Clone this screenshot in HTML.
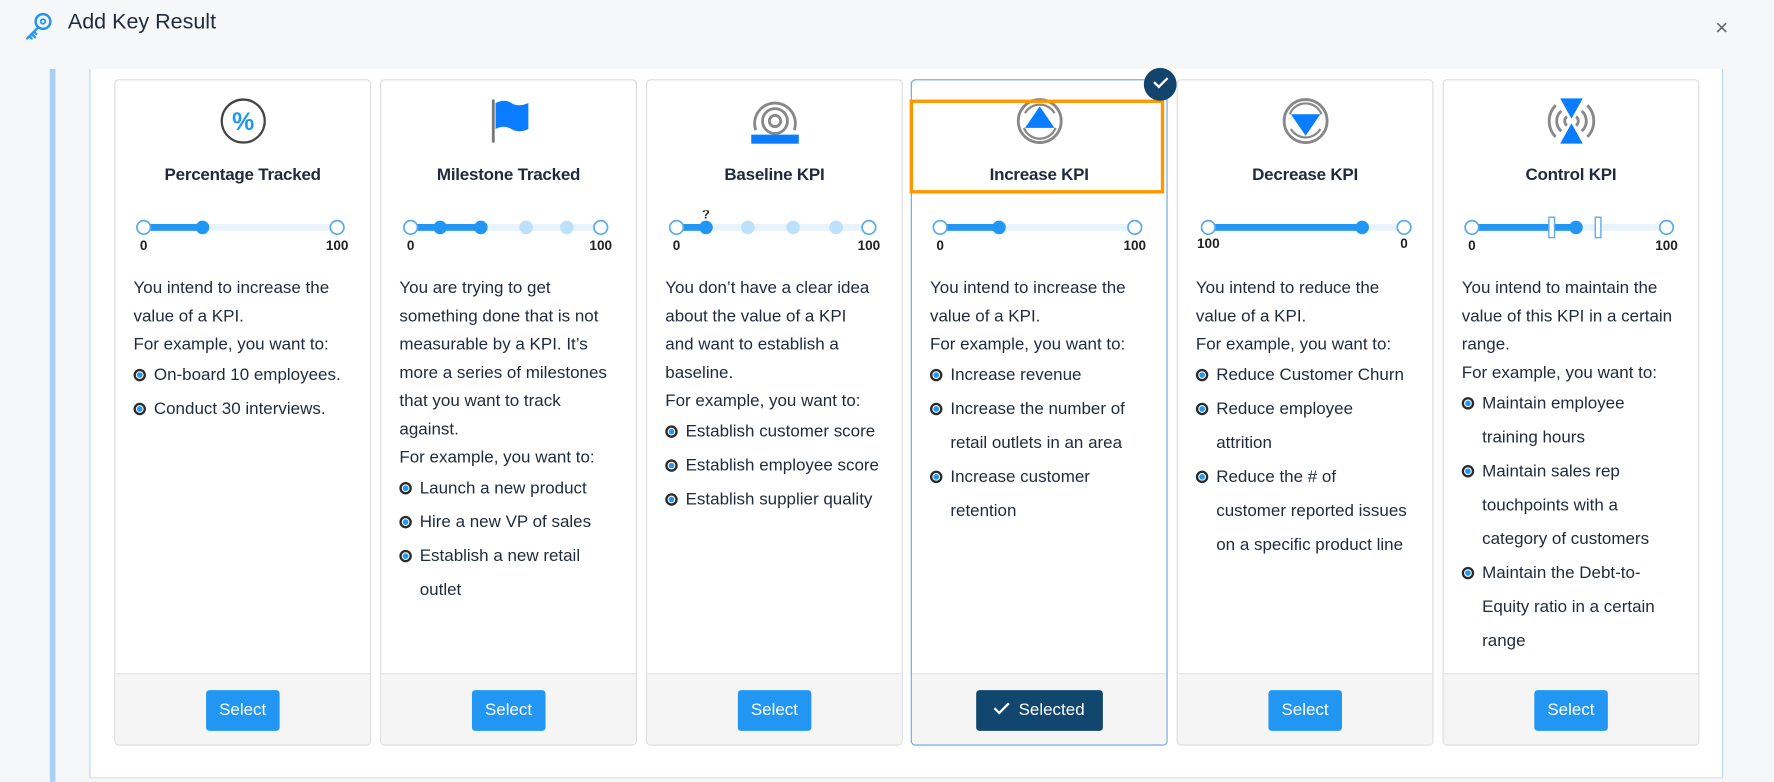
<!DOCTYPE html>
<html><head><meta charset="utf-8"><style>
html,body{margin:0;padding:0;}
body{width:1774px;height:782px;overflow:hidden;background:#f6f7f9;font-family:"Liberation Sans",sans-serif;}
#s{position:absolute;left:0;top:0;width:1568px;height:691px;transform:scale(1.13138);transform-origin:0 0;background:#f6f7f9;}
.abs{position:absolute;}
.card{position:absolute;top:70px;width:227px;height:589px;border:1px solid #dcdcdc;border-radius:4px;background:#fff;box-sizing:border-box;overflow:visible;}
.card.sel{border-color:#6aa3d8;}
.foot{position:absolute;left:0;right:0;bottom:0;height:62px;background:#f5f5f5;border-top:1px solid #dcdcdc;border-radius:0 0 4px 4px;}
.btn{position:absolute;top:14px;left:50%;transform:translateX(-50%);height:36px;line-height:36px;padding:0 12px;background:#2196f3;color:#fff;border-radius:3px;font-size:15px;white-space:nowrap;}
.title{position:absolute;top:75px;left:0;right:0;text-align:center;font-size:15px;color:#1f2a3c;font-weight:bold;letter-spacing:-0.2px;}
.icon{position:absolute;top:14px;left:50%;margin-left:-22px;width:44px;height:44px;}
.sl{position:absolute;top:115px;left:0;}
.txt{position:absolute;top:171px;left:16px;right:4px;font-size:15px;color:#1f2a3c;line-height:25px;white-space:nowrap;}
.li{position:relative;padding-left:18px;line-height:30px;}
.li:before{content:"";position:absolute;left:0;top:9px;width:7px;height:7px;border:2.5px solid #2a2a2a;border-radius:50%;background:#2196f3;box-shadow:inset 0 0 0 1px #fff;}
</style></head><body><div id="s">
<svg class="abs" style="left:20px;top:9px" width="30" height="28" viewBox="0 0 30 28"><circle cx="18" cy="10" r="6.5" fill="none" stroke="#2196f3" stroke-width="2.2"/><circle cx="18" cy="10" r="2" fill="none" stroke="#2196f3" stroke-width="1.6"/><path d="M14 15 L4 25 M8 21 L11 24 M6 23 L8 25 M10 19 L12 21" stroke="#2196f3" stroke-width="2" fill="none" stroke-linecap="round"/></svg>
<div class="abs" style="left:60px;top:9px;font-size:19px;color:#1f2a3c;">Add Key Result</div>
<div class="abs" style="left:1516px;top:14px;font-size:20px;color:#666;">×</div>
<div class="abs" style="left:44px;top:61px;width:5px;height:630px;background:#a9cff3;"></div>
<div class="abs" style="left:79px;top:61px;width:1444px;height:627px;background:#fff;border-left:1px solid #b9d8f5;border-right:1px solid #b9d8f5;box-sizing:border-box;"></div>
<div class="abs" style="left:79px;top:687px;width:1444px;height:1px;background:#ddd;"></div>

<div class="card" style="left:101px">
<svg class="icon" viewBox="0 0 44 44"><circle cx="22" cy="22" r="19" fill="none" stroke="#444" stroke-width="2"/><text x="22" y="30" text-anchor="middle" font-family="Liberation Sans" font-weight="bold" font-size="22" fill="#2196f3">%</text></svg>
<div class="title">Percentage Tracked</div>
<svg class="sl" width="227" height="45"><rect x="25" y="12" width="172" height="6" fill="#e8f3fc"/><rect x="25" y="12" width="52" height="6" fill="#2196f3"/><circle cx="25" cy="15" r="6" fill="#fff" stroke="#5aa9f0" stroke-width="1.5"/><circle cx="77" cy="15" r="6" fill="#2196f3"/><circle cx="196" cy="15" r="6" fill="#fff" stroke="#5aa9f0" stroke-width="1.5"/><text x="25" y="35" text-anchor="middle" font-size="12" font-weight="bold" fill="#222">0</text><text x="196" y="35" text-anchor="middle" font-size="12" font-weight="bold" fill="#222">100</text></svg>
<div class="txt">You intend to increase the<br>value of a KPI.<br>For example, you want to:<div class="li">On-board 10 employees.</div><div class="li">Conduct 30 interviews.</div></div>
<div class="foot"><div class="btn">Select</div></div></div>

<div class="card" style="left:336px">
<svg class="icon" viewBox="0 0 44 44"><line x1="8" y1="4" x2="8" y2="40" stroke="#777" stroke-width="2.5" stroke-linecap="round"/><path d="M10 6 Q18 2 24 6 T39 6 L39 29 Q31 33 24 29 T10 29 Z" fill="#0a7cff"/></svg>
<div class="title">Milestone Tracked</div>
<svg class="sl" width="227" height="45"><rect x="26" y="12" width="168" height="6" fill="#e8f3fc"/><rect x="26" y="12" width="62" height="6" fill="#2196f3"/><circle cx="26" cy="15" r="6" fill="#fff" stroke="#5aa9f0" stroke-width="1.5"/><circle cx="52" cy="15" r="6" fill="#2196f3"/><circle cx="88" cy="15" r="6" fill="#2196f3"/><circle cx="128" cy="15" r="6" fill="#bde0fb"/><circle cx="164" cy="15" r="6" fill="#bde0fb"/><circle cx="194" cy="15" r="6" fill="#fff" stroke="#5aa9f0" stroke-width="1.5"/><text x="26" y="35" text-anchor="middle" font-size="12" font-weight="bold" fill="#222">0</text><text x="194" y="35" text-anchor="middle" font-size="12" font-weight="bold" fill="#222">100</text></svg>
<div class="txt">You are trying to get<br>something done that is not<br>measurable by a KPI. It’s<br>more a series of milestones<br>that you want to track<br>against.<br>For example, you want to:<div class="li">Launch a new product</div><div class="li">Hire a new VP of sales</div><div class="li">Establish a new retail<br>outlet</div></div>
<div class="foot"><div class="btn">Select</div></div></div>

<div class="card" style="left:571px">
<svg class="icon" viewBox="0 0 44 44"><path d="M5 30 A18 18 0 1 1 39 30" fill="none" stroke="#888" stroke-width="2.5"/><circle cx="22" cy="22" r="11" fill="none" stroke="#888" stroke-width="2.5"/><circle cx="22" cy="22" r="5" fill="none" stroke="#888" stroke-width="2.5"/><rect x="1" y="34" width="42" height="8" fill="#0a7cff"/></svg>
<div class="title">Baseline KPI</div>
<svg class="sl" width="227" height="45"><rect x="26" y="12" width="170" height="6" fill="#e8f3fc"/><rect x="26" y="12" width="26" height="6" fill="#2196f3"/><circle cx="26" cy="15" r="6" fill="#fff" stroke="#5aa9f0" stroke-width="1.5"/><circle cx="52" cy="15" r="6" fill="#2196f3"/><circle cx="89" cy="15" r="6" fill="#bde0fb"/><circle cx="129" cy="15" r="6" fill="#bde0fb"/><circle cx="167" cy="15" r="6" fill="#bde0fb"/><circle cx="196" cy="15" r="6" fill="#fff" stroke="#5aa9f0" stroke-width="1.5"/><text x="52" y="7" text-anchor="middle" font-size="11" font-weight="bold" fill="#222">?</text><text x="26" y="35" text-anchor="middle" font-size="12" font-weight="bold" fill="#222">0</text><text x="196" y="35" text-anchor="middle" font-size="12" font-weight="bold" fill="#222">100</text></svg>
<div class="txt">You don’t have a clear idea<br>about the value of a KPI<br>and want to establish a<br>baseline.<br>For example, you want to:<div class="li">Establish customer score</div><div class="li">Establish employee score</div><div class="li">Establish supplier quality</div></div>
<div class="foot"><div class="btn">Select</div></div></div>

<div class="card sel" style="left:805px">
<svg class="icon" viewBox="0 0 44 44"><circle cx="22" cy="22" r="19" fill="none" stroke="#888" stroke-width="2.5"/><path d="M8 28 A15 15 0 0 0 36 28" fill="none" stroke="#888" stroke-width="2"/><path d="M9 15 A15 15 0 0 1 35 15" fill="none" stroke="#888" stroke-width="2"/><path d="M22 9 L35 28 L9 28 Z" fill="#0a7cff"/></svg>
<div class="title">Increase KPI</div>
<svg class="sl" width="227" height="45"><rect x="25" y="12" width="172" height="6" fill="#e8f3fc"/><rect x="25" y="12" width="52" height="6" fill="#2196f3"/><circle cx="25" cy="15" r="6" fill="#fff" stroke="#5aa9f0" stroke-width="1.5"/><circle cx="77" cy="15" r="6" fill="#2196f3"/><circle cx="197" cy="15" r="6" fill="#fff" stroke="#5aa9f0" stroke-width="1.5"/><text x="25" y="35" text-anchor="middle" font-size="12" font-weight="bold" fill="#222">0</text><text x="197" y="35" text-anchor="middle" font-size="12" font-weight="bold" fill="#222">100</text></svg>
<div class="txt">You intend to increase the<br>value of a KPI.<br>For example, you want to:<div class="li">Increase revenue</div><div class="li">Increase the number of<br>retail outlets in an area</div><div class="li">Increase customer<br>retention</div></div>
<div class="foot"><div class="btn" style="background:#11466f;padding:0 16px;"><span style="display:inline-block;width:11px;height:5px;border-left:2px solid #fff;border-bottom:2px solid #fff;transform:rotate(-45deg);margin:0 9px 4px 0;"></span>Selected</div></div>
<div class="abs" style="left:-2px;top:17px;width:225px;height:83px;border:3px solid #ff9800;box-sizing:border-box;"></div>
<div class="abs" style="left:205px;top:-11px;width:29px;height:29px;border-radius:50%;background:#12446c;"><span style="position:absolute;left:9px;top:8px;width:10px;height:5px;border-left:2px solid #fff;border-bottom:2px solid #fff;transform:rotate(-45deg);"></span></div>
</div>

<div class="card" style="left:1040px">
<svg class="icon" viewBox="0 0 44 44"><circle cx="22" cy="22" r="19" fill="none" stroke="#888" stroke-width="2.5"/><path d="M8 16 A15 15 0 0 1 36 16" fill="none" stroke="#888" stroke-width="2"/><path d="M9 29 A15 15 0 0 0 35 29" fill="none" stroke="#888" stroke-width="2"/><path d="M9 16 L35 16 L22 35 Z" fill="#0a7cff"/></svg>
<div class="title">Decrease KPI</div>
<svg class="sl" width="227" height="45"><rect x="27" y="12" width="173" height="6" fill="#e8f3fc"/><rect x="27" y="12" width="136" height="6" fill="#2196f3"/><circle cx="27" cy="15" r="6" fill="#fff" stroke="#5aa9f0" stroke-width="1.5"/><circle cx="163" cy="15" r="6" fill="#2196f3"/><circle cx="200" cy="15" r="6" fill="#fff" stroke="#5aa9f0" stroke-width="1.5"/><text x="27" y="33" text-anchor="middle" font-size="12" font-weight="bold" fill="#222">100</text><text x="200" y="33" text-anchor="middle" font-size="12" font-weight="bold" fill="#222">0</text></svg>
<div class="txt">You intend to reduce the<br>value of a KPI.<br>For example, you want to:<div class="li">Reduce Customer Churn</div><div class="li">Reduce employee<br>attrition</div><div class="li">Reduce the # of<br>customer reported issues<br>on a specific product line</div></div>
<div class="foot"><div class="btn">Select</div></div></div>

<div class="card" style="left:1275px">
<svg class="icon" viewBox="0 0 44 44"><path d="M8 8 A20 20 0 0 0 8 36 M36 8 A20 20 0 0 1 36 36 M13 13 A12 12 0 0 0 13 31 M31 13 A12 12 0 0 1 31 31 M18 18 A5 5 0 0 0 18 26 M26 18 A5 5 0 0 1 26 26" fill="none" stroke="#888" stroke-width="2.5"/><path d="M12 2 L32 2 L22 20 Z M12 42 L32 42 L22 24 Z" fill="#0a7cff"/></svg>
<div class="title">Control KPI</div>
<svg class="sl" width="227" height="45"><rect x="25" y="12" width="172" height="6" fill="#e8f3fc"/><rect x="25" y="12" width="92" height="6" fill="#2196f3"/><circle cx="25" cy="15" r="6" fill="#fff" stroke="#5aa9f0" stroke-width="1.5"/><rect x="93" y="6" width="5" height="18" fill="#fff" stroke="#5aa9f0" stroke-width="1.2"/><circle cx="117" cy="15" r="6" fill="#2196f3"/><rect x="134" y="6" width="5" height="18" fill="#fff" stroke="#5aa9f0" stroke-width="1.2"/><circle cx="197" cy="15" r="6" fill="#fff" stroke="#5aa9f0" stroke-width="1.5"/><text x="25" y="35" text-anchor="middle" font-size="12" font-weight="bold" fill="#222">0</text><text x="197" y="35" text-anchor="middle" font-size="12" font-weight="bold" fill="#222">100</text></svg>
<div class="txt">You intend to maintain the<br>value of this KPI in a certain<br>range.<br>For example, you want to:<div class="li">Maintain employee<br>training hours</div><div class="li">Maintain sales rep<br>touchpoints with a<br>category of customers</div><div class="li">Maintain the Debt-to-<br>Equity ratio in a certain<br>range</div></div>
<div class="foot"><div class="btn">Select</div></div></div>
</div></body></html>
